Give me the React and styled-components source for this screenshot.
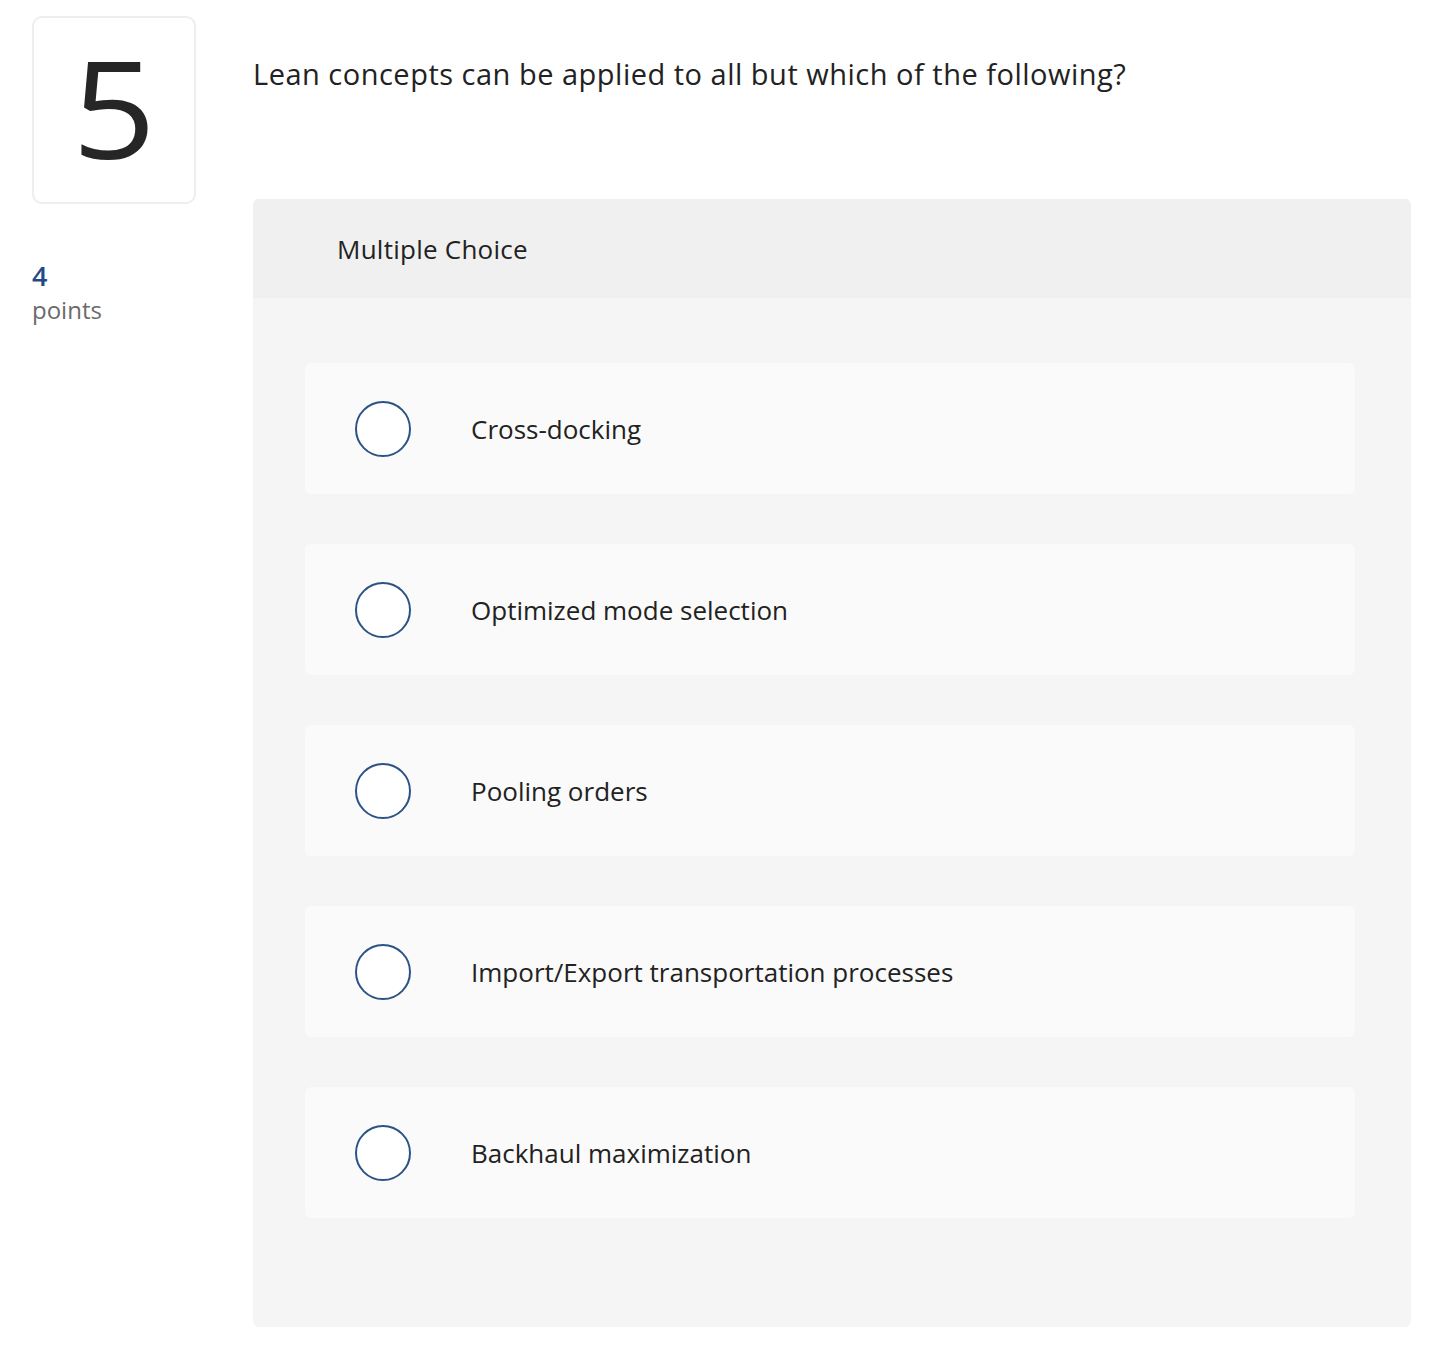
import React from 'react'
import styled, { createGlobalStyle } from 'styled-components'

const GlobalStyle = createGlobalStyle`
  body {
    margin: 0;
    background: #fff;
    font-family: "Open Sans", "Liberation Sans", sans-serif;
    color: #222;
  }
`

const Page = styled.div`
  display: flex;
  align-items: flex-start;
  gap: 57px;
  padding: 16px 43px 40px 32px;
`

const Side = styled.div`
  width: 164px;
  flex-shrink: 0;
`

const NumberBox = styled.div`
  height: 188px;
  box-sizing: border-box;
  border: 2px solid #eeeeee;
  border-radius: 10px;
  display: flex;
  align-items: center;
  justify-content: center;
  font-size: 136px;
  line-height: 1;
  color: #262626;
  padding-bottom: 6px;
`

const Digit = styled.span`
  display: inline-block;
  transform: scaleX(1.08);
`

const Points = styled.div`
  margin-top: 54px;
  line-height: 36px;
  .value {
    color: #1f4a87;
    font-size: 27px;
    font-weight: 600;
  }
  .label {
    color: #6b6b6b;
    font-size: 24px;
    margin-top: -2px;
  }
`

const Main = styled.div`
  flex: 1;
  min-width: 0;
`

const Question = styled.div`
  font-size: 29px;
  letter-spacing: 0.5px;
  line-height: 40px;
  padding-top: 38px;
  margin-bottom: 105px;
  color: #222;
`

const Panel = styled.div`
  background: #f5f5f5;
  border-radius: 6px;
  overflow: hidden;
`

const PanelHeader = styled.div`
  background: #f0f0f0;
  height: 99px;
  display: flex;
  align-items: center;
  padding-left: 84px;
  font-size: 26px;
  letter-spacing: 0.25px;
`

const Options = styled.div`
  display: flex;
  flex-direction: column;
  gap: 50px;
  padding: 65px 56px 109px 52px;
`

const Option = styled.label`
  display: flex;
  align-items: center;
  height: 131px;
  background: #fafafa;
  border-radius: 6px;
  padding-left: 50px;
  font-size: 26px;
  cursor: pointer;
`

const Radio = styled.span`
  width: 56px;
  height: 56px;
  box-sizing: border-box;
  border-radius: 50%;
  border: 2px solid #2c5385;
  background: #fff;
  flex-shrink: 0;
  margin-right: 60px;
`

const choices = [
  'Cross-docking',
  'Optimized mode selection',
  'Pooling orders',
  'Import/Export transportation processes',
  'Backhaul maximization',
]

export default function App() {
  return (
    <>
      <GlobalStyle />
      <Page>
        <Side>
          <NumberBox>
            <Digit>5</Digit>
          </NumberBox>
          <Points>
            <div className="value">4</div>
            <div className="label">points</div>
          </Points>
        </Side>
        <Main>
          <Question>Lean concepts can be applied to all but which of the following?</Question>
          <Panel>
            <PanelHeader>Multiple Choice</PanelHeader>
            <Options>
              {choices.map((c) => (
                <Option key={c}>
                  <Radio />
                  {c}
                </Option>
              ))}
            </Options>
          </Panel>
        </Main>
      </Page>
    </>
  )
}
